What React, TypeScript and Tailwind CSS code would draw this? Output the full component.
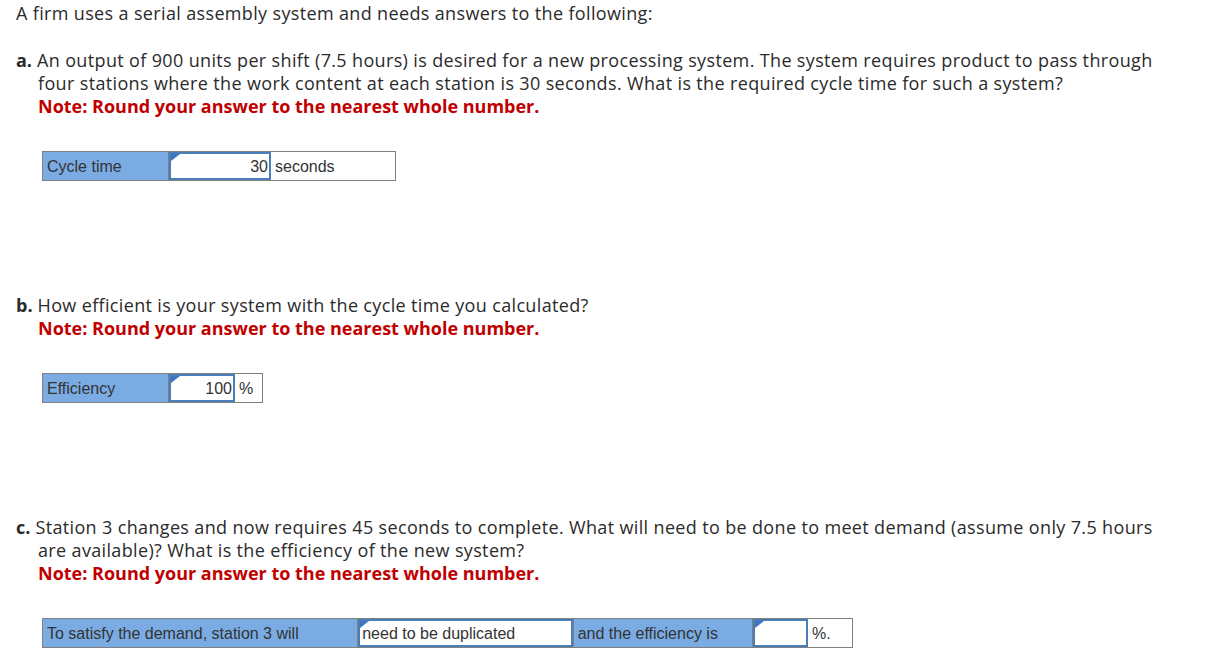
import React from 'react';

const body = "font-['Open_Sans','Noto_Sans',sans-serif] text-[18px] leading-[23px] tracking-[0.35px] text-[#2b2b2b]";
const cell = "font-['Liberation_Sans',Arial,sans-serif] text-[16px] tracking-normal text-[#333]";

const Note = () => (
  <span className="font-bold tracking-normal text-[#c00000]">Note: Round your answer to the nearest whole number.</span>
);

const Label: React.FC<{ w: string; children: React.ReactNode }> = ({ w, children }) => (
  <div className={`${w} h-full bg-[#7aabe3] border-r border-[#808080] flex items-center pl-[4px] whitespace-nowrap`}>
    {children}
  </div>
);

const Answer: React.FC<{ w: string; value?: string; left?: boolean }> = ({ w, value, left }) => (
  <div className={`${w} h-full relative bg-white border-2 border-[#4a7ebb] flex items-center ${left ? 'justify-start pl-[2px]' : 'justify-end pr-[1px]'} whitespace-nowrap`}>
    <span className="absolute left-0 top-0 w-0 h-0 border-t-[7px] border-t-[#3d75c2] border-r-[9px] border-r-transparent" />
    {value}
  </div>
);

const Unit: React.FC<{ w: string; children: React.ReactNode }> = ({ w, children }) => (
  <div className={`${w} h-full bg-white flex items-center pl-[4px] whitespace-nowrap`}>{children}</div>
);

export default function App() {
  return (
    <div className="w-[1211px] h-[668px] bg-white overflow-hidden">
      <div className={`${body} pl-[16px] pt-[2px]`}>
        <p>A firm uses a serial assembly system and needs answers to the following:</p>

        <div className="mt-[24px] pl-[22px] -indent-[22px]">
          <span className="font-bold tracking-normal">a.</span> An output of 900 units per shift (7.5 hours) is desired for a new processing system. The system requires product to pass through
          <br />four stations where the work content at each station is 30 seconds. What is the required cycle time for such a system?
          <br /><Note />
        </div>

        <div className={`${cell} mt-[33px] ml-[26px] flex h-[30px] w-[354px] border border-[#808080]`}>
          <Label w="w-[126px]">Cycle time</Label>
          <Answer w="w-[102px]" value="30" />
          <Unit w="w-[124px]">seconds</Unit>
        </div>

        <div className="mt-[113px] pl-[22px] -indent-[22px]">
          <span className="font-bold tracking-normal">b.</span> How efficient is your system with the cycle time you calculated?
          <br /><Note />
        </div>

        <div className={`${cell} mt-[33px] ml-[26px] flex h-[30px] w-[221px] border border-[#808080]`}>
          <Label w="w-[126px]">Efficiency</Label>
          <Answer w="w-[66px]" value="100" />
          <Unit w="w-[27px]">%</Unit>
        </div>

        <div className="mt-[113px] pl-[22px] -indent-[22px]">
          <span className="font-bold tracking-normal">c.</span> Station 3 changes and now requires 45 seconds to complete. What will need to be done to meet demand (assume only 7.5 hours
          <br />are available)? What is the efficiency of the new system?
          <br /><Note />
        </div>

        <div className={`${cell} mt-[33px] ml-[26px] flex h-[30px] w-[811px] border border-[#808080]`}>
          <Label w="w-[316px]">To satisfy the demand, station 3 will</Label>
          <Answer w="w-[215px]" value="need to be duplicated" left />
          <div className="w-[181px] h-full bg-[#7aabe3] border-x border-[#808080] flex items-center pl-[4px] whitespace-nowrap">and the efficiency is</div>
          <Answer w="w-[55px]" />
          <Unit w="w-[44px]">%.</Unit>
        </div>
      </div>
    </div>
  );
}
